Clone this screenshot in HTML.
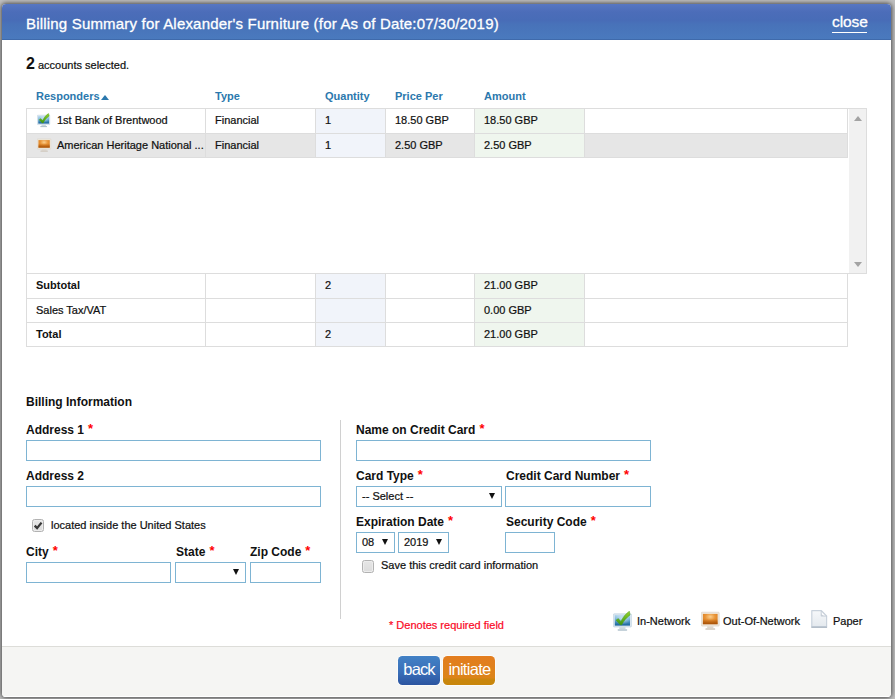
<!DOCTYPE html>
<html>
<head>
<meta charset="utf-8">
<title>Billing Summary</title>
<style>
html,body{margin:0;padding:0;}
body{width:895px;height:699px;overflow:hidden;background:#bfbfbf;font-family:"Liberation Sans",sans-serif;font-size:12px;color:#111;position:relative;-webkit-text-stroke-width:0.22px;}
.b,.lbl,.th,.req{-webkit-text-stroke:0;}
#title,#close{-webkit-text-stroke-width:0.3px;}
.btn{-webkit-text-stroke:0;}
#modal{position:absolute;left:2px;top:4px;width:889px;height:693px;background:#fff;border-radius:4px 4px 4px 4px;box-shadow:0 0 4px 1px rgba(0,0,0,.6);overflow:hidden;}
#hdr{position:absolute;left:0;top:0;width:889px;height:36px;background:linear-gradient(#5777c2 0%,#4c6db9 22%,#486cb7 45%,#4872b9 56%,#4a7abe 100%);box-shadow:inset 0 -1px 0 #3f6aab;}
#title{position:absolute;left:24px;top:11px;font-size:15px;line-height:18px;color:#fff;white-space:nowrap;letter-spacing:0.19px;}
#close{position:absolute;left:830px;top:9px;font-size:15.5px;letter-spacing:-0.1px;color:#fff;white-space:nowrap;line-height:18px;}
#close i{position:absolute;left:0;top:19px;width:35px;height:1.3px;background:#fff;}
.abs{position:absolute;white-space:nowrap;}
.b{font-weight:bold;}
.th{position:absolute;top:86px;font-weight:bold;color:#2b78ad;font-size:11px;white-space:nowrap;}
#grid{position:absolute;left:24px;top:104px;width:841px;height:166px;border:1px solid #ddd;box-sizing:border-box;background:#fff;}
#sb{position:absolute;right:0;top:0;width:17px;height:164px;background:#f1f1f1;}
.row{position:absolute;left:0;width:820px;height:24px;border-bottom:1px solid #ddd;border-right:1px solid #ddd;}
.cell{position:absolute;top:0;height:100%;line-height:22px;box-sizing:border-box;border-left:1px solid #ddd;padding-left:9px;font-size:11px;white-space:nowrap;overflow:hidden;}
.c1{left:0;width:178px;border-left:none;}
.c2{left:178px;width:110px;}
.c3{left:288px;width:70px;background:#f1f4fa;}
.c4{left:358px;width:89px;}
.c5{left:447px;width:110px;background:#eff6ee;}
.c6{left:557px;width:263px;}
#sum{position:absolute;left:24px;top:270px;width:822px;height:73px;border:1px solid #ddd;border-top:none;box-sizing:border-box;}
.inp{position:absolute;box-sizing:border-box;height:21px;border:1px solid #7eb4d3;background:#fff;}
.lbl{position:absolute;font-weight:bold;font-size:12px;white-space:nowrap;}
.req{color:#ff0000;font-weight:bold;position:relative;top:-1px;font-size:13px;line-height:12px;margin-left:0.7px;}
.sel{position:absolute;box-sizing:border-box;height:21px;border:1px solid #7eb4d3;background:#fff;font-size:11px;line-height:19px;padding-left:5px;white-space:nowrap;}
.arr{position:absolute;right:6px;top:6px;width:0;height:0;border-left:3.5px solid transparent;border-right:3.5px solid transparent;border-top:6px solid #111;}
.cb{position:absolute;box-sizing:border-box;width:12px;height:12.4px;border:1px solid #b2b2b2;border-radius:2.5px;background:linear-gradient(#e6e6e6,#dcdcdc);box-shadow:inset 0 0 0 1px #ececec;}
#ftr{position:absolute;left:0;top:642px;width:889px;height:51px;background:#f5f5f3;border-top:1px solid #ddddd9;border-bottom:1px solid #fff;box-sizing:border-box;}
.btn{position:absolute;top:9px;height:29px;border-radius:4.5px;color:#fff;font-size:16.5px;line-height:26px;text-align:center;letter-spacing:-0.9px;box-sizing:border-box;padding-left:0px;box-shadow:0 0 0 1px rgba(255,255,255,.55);}
</style>
</head>
<body>
<svg width="0" height="0" style="position:absolute">
<defs>
<linearGradient id="gScrB" x1="0" y1="0" x2="0" y2="1"><stop offset="0" stop-color="#b2d6ee"/><stop offset="0.45" stop-color="#5fa6d2"/><stop offset="1" stop-color="#17629a"/></linearGradient>
<radialGradient id="gScrBh" cx="0.5" cy="0.35" r="0.55"><stop offset="0" stop-color="#ffffff" stop-opacity="0.6"/><stop offset="1" stop-color="#ffffff" stop-opacity="0"/></radialGradient>
<linearGradient id="gChk" x1="0" y1="0" x2="0" y2="1"><stop offset="0" stop-color="#9ad22e"/><stop offset="0.6" stop-color="#5fb01c"/><stop offset="1" stop-color="#3f9412"/></linearGradient>
<radialGradient id="gScrO" cx="0.5" cy="0.28" r="0.75"><stop offset="0" stop-color="#fbcf8e"/><stop offset="0.45" stop-color="#e99538"/><stop offset="1" stop-color="#d37316"/></radialGradient>
<linearGradient id="gScrOd" x1="0" y1="0" x2="0" y2="1"><stop offset="0.5" stop-color="#a04c06" stop-opacity="0"/><stop offset="1" stop-color="#a04c06" stop-opacity="0.85"/></linearGradient>
<linearGradient id="gPap" x1="0" y1="0" x2="0" y2="1"><stop offset="0" stop-color="#f6f8fa"/><stop offset="1" stop-color="#e4e9ee"/></linearGradient>
<symbol id="icoIn" viewBox="0 0 19 20">
  <rect x="0.4" y="2.8" width="18" height="13.2" rx="0.8" fill="#dbe7f0" stroke="#b9cedd" stroke-width="0.6"/>
  <rect x="1.8" y="4.1" width="15.2" height="10.5" fill="url(#gScrB)"/>
  <rect x="1.8" y="4.1" width="15.2" height="10.5" fill="url(#gScrBh)"/>
  <rect x="6.3" y="16.2" width="6.2" height="1.9" fill="#cbd7df"/>
  <rect x="4.6" y="18.2" width="9.6" height="1.5" rx="0.6" fill="#b3c3ce"/>
  <path d="M3 9.2 L5.3 7.6 L7.8 10.4 C10 6.2 13 2.4 16.4 0.2 L17 4 C13.8 6.4 10.8 9.8 8.8 13.7 L7.2 13.7 Z" fill="url(#gChk)" stroke="#4b9a16" stroke-width="0.5" stroke-linejoin="round"/>
</symbol>
<symbol id="icoOut" viewBox="0 0 19 20">
  <rect x="0.3" y="1.2" width="17.9" height="13.9" rx="0.8" fill="#efe8dd" stroke="#d9d0c2" stroke-width="0.6"/>
  <rect x="1.9" y="2.9" width="14.7" height="10.3" fill="url(#gScrO)"/>
  <rect x="1.9" y="2.9" width="14.7" height="10.3" fill="url(#gScrOd)"/>
  <rect x="6.2" y="15.3" width="6.2" height="1.9" fill="#ded8ce"/>
  <rect x="4.4" y="17.3" width="9.8" height="1.5" rx="0.6" fill="#cfc8bd"/>
</symbol>
<symbol id="icoPap" viewBox="0 0 17 19">
  <path d="M0.8 0.7 H10.4 L15.6 5.9 V16.6 H0.8 Z" fill="url(#gPap)" stroke="#c9d2dc" stroke-width="1.2" stroke-linejoin="round"/>
  <path d="M0.3 16.4 H16.1 V18 H0.3 Z" fill="#b4bec9"/>
  <path d="M10.2 0.9 V6.1 H15.4 Z" fill="#fbfcfd" stroke="#c3ccd6" stroke-width="0.9" stroke-linejoin="round"/>
  <path d="M10.4 2.2 C10.4 4.6 11.2 5.9 14.2 5.9 L10.4 5.9 Z" fill="#c2c9d2"/>
</symbol>
</defs>
</svg>
<div id="modal">
  <div id="hdr">
    <div id="title">Billing Summary for Alexander's Furniture (for As of Date:07/30/2019)</div>
    <div id="close">close<i></i></div>
  </div>

  <div class="abs" style="left:24px;top:51px;font-size:11px;"><span class="b" style="font-size:16px;">2</span> accounts selected.</div>

  <div class="th" style="left:34px;">Responders<span style="display:inline-block;width:0;height:0;border-left:4px solid transparent;border-right:4px solid transparent;border-bottom:5px solid #2b78ad;margin-left:1px;position:relative;top:-0.5px;"></span></div>
  <div class="th" style="left:213px;">Type</div>
  <div class="th" style="left:323px;">Quantity</div>
  <div class="th" style="left:393px;">Price Per</div>
  <div class="th" style="left:482px;">Amount</div>

  <div id="grid">
    <div class="row" style="top:0;">
      <div class="cell c1"><svg style="position:absolute;left:10px;top:4px;" width="13.5" height="14.6" viewBox="0 0 19 20"><use href="#icoIn"/></svg><span style="margin-left:21px;">1st Bank of Brentwood</span></div>
      <div class="cell c2">Financial</div>
      <div class="cell c3">1</div>
      <div class="cell c4">18.50 GBP</div>
      <div class="cell c5">18.50 GBP</div>
      <div class="cell c6"></div>
    </div>
    <div class="row r2" style="top:25px;height:23px;background:#e6e6e6;">
      <div class="cell c1"><svg style="position:absolute;left:10px;top:3.5px;" width="14.6" height="14.6" viewBox="0 0 19 20" preserveAspectRatio="none"><use href="#icoOut"/></svg><span style="margin-left:21px;">American Heritage National ...</span></div>
      <div class="cell c2">Financial</div>
      <div class="cell c3">1</div>
      <div class="cell c4">2.50 GBP</div>
      <div class="cell c5">2.50 GBP</div>
      <div class="cell c6"></div>
    </div>
    <div id="sb">
      <div style="position:absolute;left:5px;top:7px;width:0;height:0;border-left:4px solid transparent;border-right:4px solid transparent;border-bottom:5px solid #a3a3a3;"></div>
      <div style="position:absolute;left:5px;bottom:6px;width:0;height:0;border-left:4px solid transparent;border-right:4px solid transparent;border-top:5px solid #a3a3a3;"></div>
    </div>
  </div>

  <div id="sum">
    <div class="row" style="top:0;width:820px;border-right:none;">
      <div class="cell c1 b">Subtotal</div>
      <div class="cell c2"></div>
      <div class="cell c3">2</div>
      <div class="cell c4"></div>
      <div class="cell c5">21.00 GBP</div>
      <div class="cell c6"></div>
    </div>
    <div class="row" style="top:25px;width:820px;height:23px;border-right:none;">
      <div class="cell c1">Sales Tax/VAT</div>
      <div class="cell c2"></div>
      <div class="cell c3"></div>
      <div class="cell c4"></div>
      <div class="cell c5">0.00 GBP</div>
      <div class="cell c6"></div>
    </div>
    <div class="row" style="top:49px;width:820px;border-bottom:none;border-right:none;height:23px;">
      <div class="cell c1 b">Total</div>
      <div class="cell c2"></div>
      <div class="cell c3">2</div>
      <div class="cell c4"></div>
      <div class="cell c5">21.00 GBP</div>
      <div class="cell c6"></div>
    </div>
  </div>

  <div class="lbl" style="left:24px;top:391px;">Billing Information</div>

  <div class="lbl" style="left:24px;top:419px;">Address 1 <span class="req">*</span></div>
  <div class="inp" style="left:24px;top:436px;width:295px;"></div>
  <div class="lbl" style="left:24px;top:465px;">Address 2</div>
  <div class="inp" style="left:24px;top:482px;width:295px;"></div>
  <div class="cb" style="left:30px;top:515.3px;"><svg width="12" height="12" viewBox="0 0 12 12" style="position:absolute;left:-1px;top:-1px"><path d="M2.7 6.6 L5.1 9.1 L9.5 3.6" fill="none" stroke="#383838" stroke-width="2.3"/></svg></div>
  <div class="abs" style="left:49px;top:515px;font-size:11px;">located inside the United States</div>
  <div class="lbl" style="left:24px;top:541px;">City <span class="req">*</span></div>
  <div class="lbl" style="left:174px;top:541px;">State <span class="req">*</span></div>
  <div class="lbl" style="left:248px;top:541px;">Zip Code <span class="req">*</span></div>
  <div class="inp" style="left:24px;top:558.4px;width:145px;"></div>
  <div class="sel" style="left:173px;top:558.4px;width:71px;"><div class="arr"></div></div>
  <div class="inp" style="left:248px;top:558.4px;width:71px;"></div>

  <div style="position:absolute;left:338px;top:416px;width:1px;height:199px;background:#d0d0d0;"></div>

  <div class="lbl" style="left:354px;top:419px;">Name on Credit Card <span class="req">*</span></div>
  <div class="inp" style="left:354px;top:436px;width:295px;"></div>
  <div class="lbl" style="left:354px;top:464.6px;">Card Type <span class="req">*</span></div>
  <div class="lbl" style="left:504px;top:464.6px;">Credit Card Number <span class="req">*</span></div>
  <div class="sel" style="left:354px;top:481.7px;width:146px;">-- Select --<div class="arr"></div></div>
  <div class="inp" style="left:503px;top:481.7px;width:146px;"></div>
  <div class="lbl" style="left:354px;top:510.5px;">Expiration Date <span class="req">*</span></div>
  <div class="lbl" style="left:504px;top:510.5px;">Security Code <span class="req">*</span></div>
  <div class="sel" style="left:354px;top:527.5px;width:39px;">08<div class="arr"></div></div>
  <div class="sel" style="left:396px;top:527.5px;width:51px;">2019<div class="arr"></div></div>
  <div class="inp" style="left:503px;top:527.5px;width:50px;"></div>
  <div class="cb" style="left:360px;top:556.3px;"></div>
  <div class="abs" style="left:379px;top:555px;font-size:11px;">Save this credit card information</div>

  <div class="abs" style="left:387px;top:615px;font-size:11px;color:#fa0a28;">* Denotes required field</div>

  <svg class="abs" style="left:611px;top:607px;" width="19" height="20"><use href="#icoIn"/></svg>
  <svg class="abs" style="left:699px;top:607px;" width="19" height="20"><use href="#icoOut"/></svg>
  <svg class="abs" style="left:809px;top:606px;" width="17" height="19"><use href="#icoPap"/></svg>
  <div class="abs" style="left:635px;top:611px;font-size:11px;">In-Network</div>
  <div class="abs" style="left:721px;top:611px;font-size:11px;">Out-Of-Network</div>
  <div class="abs" style="left:831px;top:611px;font-size:11px;">Paper</div>

  <div id="ftr">
    <div class="btn" style="left:396px;width:42px;background:linear-gradient(#4281c5 0%,#3a6fb8 55%,#2b54a0 100%);">back</div>
    <div class="btn" style="left:441px;width:52px;background:linear-gradient(#e37d1f 0%,#dc8419 74%,#c9860d 82%,#c8860c 100%);letter-spacing:-0.7px;padding-left:1px;">initiate</div>
  </div>
</div>
</body>
</html>
